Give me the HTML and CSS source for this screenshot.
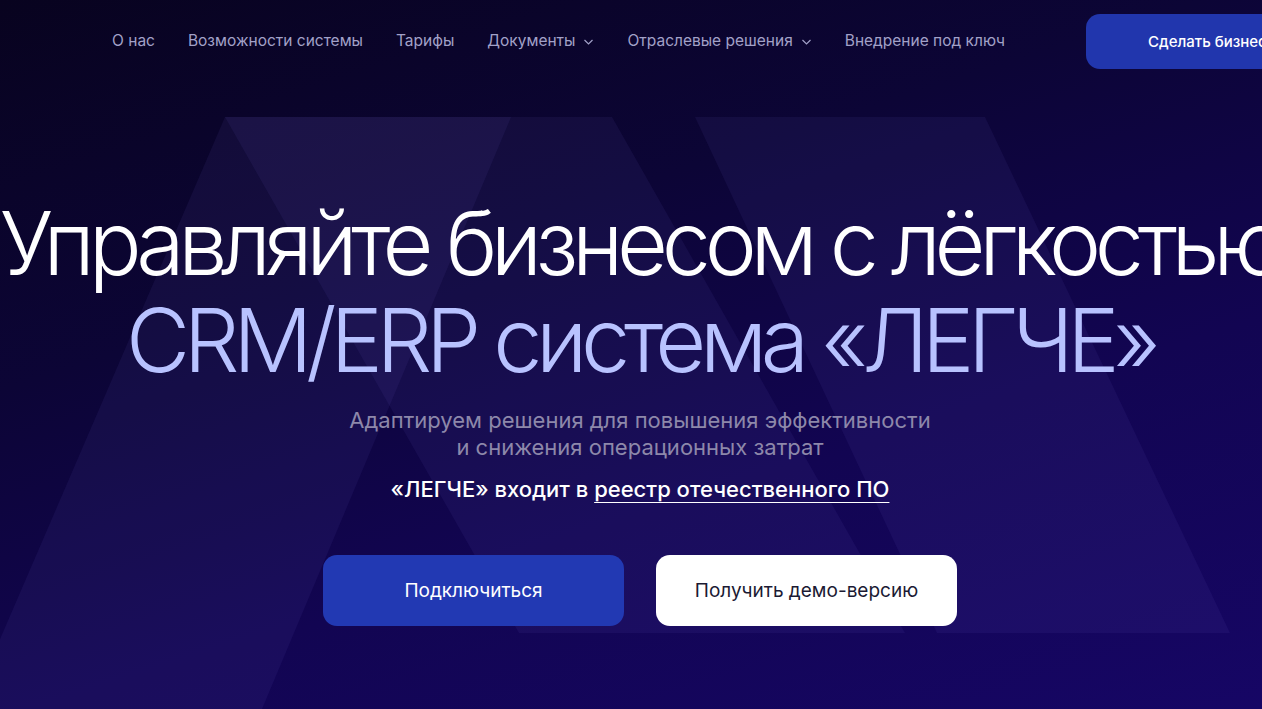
FILE: index.html
```html
<!DOCTYPE html>
<html lang="ru">
<head>
<meta charset="utf-8">
<title>ЛЕГЧЕ — CRM/ERP система</title>
<link rel="stylesheet" href="styles.css">
</head>
<body>
<div class="page">
  <svg class="bg-shapes" viewBox="0 0 1262 709" preserveAspectRatio="none" aria-hidden="true">
    <polygon points="225,117 511,117 262,709 -30,709" class="shape"/>
    <polygon points="225,117 612,117 905,633 519,633" class="shape"/>
    <polygon points="695,117 985,117 1230,633 937,633" class="shape"/>
  </svg>

  <header class="header">
    <nav class="nav">
      <a class="nav-link" href="#">О нас</a>
      <a class="nav-link" href="#">Возможности системы</a>
      <a class="nav-link" href="#">Тарифы</a>
      <a class="nav-link" href="#">Документы
        <svg class="chev" viewBox="0 0 10 6"><path d="M1 1l4 4 4-4"/></svg></a>
      <a class="nav-link" href="#">Отраслевые решения
        <svg class="chev" viewBox="0 0 10 6"><path d="M1 1l4 4 4-4"/></svg></a>
      <a class="nav-link" href="#">Внедрение под ключ</a>
    </nav>
    <a class="header-btn" href="#">Сделать бизнес легче</a>
  </header>

  <main class="hero">
    <h1 class="title">
      <span class="title-line">Управляйте бизнесом с лёгкостью</span>
      <span class="title-line accent">CRM/ERP система «ЛЕГЧЕ»</span>
    </h1>
    <p class="lead">Адаптируем решения для повышения эффективности<br>и снижения операционных затрат</p>
    <p class="registry">«ЛЕГЧЕ» входит в <a href="#" class="registry-link">реестр отечественного ПО</a></p>
    <div class="actions">
      <a class="btn btn-primary" href="#">Подключиться</a>
      <a class="btn btn-light" href="#">Получить демо-версию</a>
    </div>
  </main>
</div>
</body>
</html>
```

FILE: styles.css
```css
* { box-sizing: border-box; }

html, body {
  margin: 0;
  padding: 0;
  height: 100%;
}

body {
  font-family: "Inter", "Roboto", "Liberation Sans", sans-serif;
  background: #0a0529;
  overflow: hidden;
}

.page {
  position: relative;
  width: 100%;
  height: 709px;
  overflow: hidden;
  background: linear-gradient(162deg, #08031f 0%, #0c0536 35%, #120552 65%, #160665 100%);
}

.bg-shapes {
  position: absolute;
  left: 0;
  top: 0;
  width: 100%;
  height: 100%;
  z-index: 0;
}

.shape {
  fill: rgba(120, 110, 210, 0.085);
}

.header {
  position: relative;
  z-index: 1;
  display: flex;
  align-items: center;
  padding: 13px 0 0 112px;
  height: 68px;
}

.nav {
  display: flex;
  align-items: center;
  gap: 33px;
  margin-right: 81px;
  flex-shrink: 0;
}

.nav-link {
  color: #a2a1c8;
  text-decoration: none;
  font-size: 15.5px;
  line-height: 20px;
  display: flex;
  align-items: center;
  gap: 8px;
  white-space: nowrap;
}

.chev {
  width: 11px;
  height: 6px;
  fill: none;
  stroke: #a2a1c8;
  stroke-width: 1.2;
  margin-top: 2px;
}

.header-btn {
  flex-shrink: 0;
  display: flex;
  align-items: center;
  width: 240px;
  height: 55px;
  margin-top: 1px;
  padding-left: 62px;
  border-radius: 14px;
  background: #2136ad;
  color: #ffffff;
  text-decoration: none;
  font-size: 15px;
  font-weight: 500;
  white-space: nowrap;
}

.hero {
  position: relative;
  z-index: 1;
  display: flex;
  flex-direction: column;
  align-items: center;
  text-align: center;
  padding-left: 18px;
}

.title {
  margin: 127px 0 0;
  font-weight: 300;
  font-size: 88px;
  line-height: 97px;
  letter-spacing: -0.072em;
  display: flex;
  flex-direction: column;
  align-items: center;
  width: 100%;
}

.title-line {
  display: block;
  white-space: nowrap;
  color: #ffffff;
}

.title-line.accent {
  color: #b8c2ff;
}

.lead {
  margin: 18px 0 0;
  color: #8d88aa;
  font-size: 22px;
  line-height: 27px;
  font-weight: 400;
}

.registry {
  margin: 14px 0 0;
  color: #ffffff;
  font-size: 22px;
  line-height: 28px;
  font-weight: 500;
}

.registry-link {
  color: #ffffff;
  text-decoration: underline;
  text-decoration-thickness: 1px;
  text-underline-offset: 5px;
}

.actions {
  display: flex;
  gap: 32px;
  margin-top: 52px;
}

.btn {
  display: flex;
  align-items: center;
  justify-content: center;
  width: 301px;
  height: 71px;
  border-radius: 14px;
  font-size: 19px;
  font-weight: 400;
  text-decoration: none;
}

.btn-primary {
  background: #2239b3;
  color: #ffffff;
}

.btn-light {
  background: #ffffff;
  color: #1b1a33;
}
```
